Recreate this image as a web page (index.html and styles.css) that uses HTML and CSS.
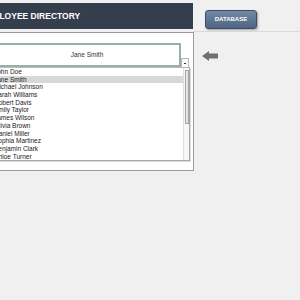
FILE: index.html
```html
<!DOCTYPE html>
<html lang="en">
<head>
    <meta charset="UTF-8">
    <meta name="viewport" content="width=device-width, initial-scale=1.0">
    <title>Employee Directory</title>
    <link rel="stylesheet" href="styles.css">
</head>
<body>
    <div class="page">
        <div class="directory">
            <div class="header">EMPLOYEE DIRECTORY</div>

            <div class="panel">
                <div class="combo">
                    <div class="combo-input">Jane Smith</div>
                    <div class="combo-btn"><span class="combo-glyph"></span></div>
                </div>

                <div class="list">
                    <ul class="list-items">
                        <li>John Doe</li>
                        <li class="selected">Jane Smith</li>
                        <li>Michael Johnson</li>
                        <li>Sarah Williams</li>
                        <li>Robert Davis</li>
                        <li>Emily Taylor</li>
                        <li>James Wilson</li>
                        <li>Olivia Brown</li>
                        <li>Daniel Miller</li>
                        <li>Sophia Martinez</li>
                        <li>Benjamin Clark</li>
                        <li>Chloe Turner</li>
                    </ul>
                    <div class="scrollbar">
                        <div class="thumb"></div>
                    </div>
                </div>
            </div>
        </div>

        <div class="side">
            <div class="toolbar">
                <button class="btn-db">DATABASE</button>
            </div>
            <div class="pointer">
                <svg width="17" height="10" viewBox="0 0 17 10">
                    <polygon points="0,5 7,0 7,2.5 16,2.5 16,7.5 7,7.5 7,10" fill="#707070"/>
                </svg>
            </div>
        </div>
    </div>
</body>
</html>
```

FILE: styles.css
```css
body {
    margin: 0;
    background-color: #f0f0f0;
    font-family: "Liberation Sans Narrow", "Liberation Sans", Arial, sans-serif;
    overflow: hidden;
}
.page {
    display: flex;
    margin-left: -20px;
}
.directory {
    width: 213px;
    flex: none;
}
.header {
    margin-top: 3px;
    height: 26px;
    background-color: #353e4d;
    color: white;
    font-weight: bold;
    font-size: 8.5px;
    line-height: 26px;
    padding-left: 1px;
    white-space: nowrap;
}
.panel {
    margin-top: 3px;
    height: 127px;
    background: white;
    border: 1px solid #999;
    padding: 10px 3px 0 12px;
    box-sizing: content-box;
    width: 197px;
}
.combo {
    position: relative;
    width: 188px;
}
.combo-input {
    height: 20px;
    border: 2px solid #97b2a3;
    text-align: center;
    font-size: 6.5px;
    line-height: 20px;
    color: #333;
}
.combo-btn {
    position: absolute;
    right: -8px;
    bottom: -1px;
    width: 6px;
    height: 8px;
    background: #fafafa;
    border: 1px solid #b5b5b5;
    display: flex;
    align-items: center;
    justify-content: center;
}
.combo-glyph {
    width: 2px;
    height: 1px;
    background: #333;
}
.list {
    display: flex;
    width: 195px;
    height: 92px;
    border: 1px solid #a8a8a8;
    border-top-color: #bdbdbd;
    box-shadow: 1px 1px 0 #dcdcdc;
}
.list-items {
    list-style: none;
    margin: 0;
    padding: 0;
    flex: 1;
}
.list-items li {
    height: 7.7px;
    line-height: 7.7px;
    font-size: 6.5px;
    color: #222;
    white-space: nowrap;
}
.list-items li.selected {
    background-color: #d8d8d8;
}
.scrollbar {
    width: 5px;
    border-left: 1px solid #dedede;
    background: #f7f7f7;
    padding-top: 2px;
}
.thumb {
    width: 2px;
    height: 52px;
    margin-left: 1px;
    border: 1px solid #a6a6a6;
    background: #e4e4e4;
}
.side {
    flex: 1;
}
.toolbar {
    height: 32px;
    border-bottom: 1px solid #dadada;
    box-sizing: border-box;
    padding: 7px 0 0 12px;
}
.btn-db {
    width: 52px;
    height: 19px;
    border: 1px solid #3e4f65;
    border-radius: 3px;
    background: linear-gradient(#7189a5, #4f6582);
    box-shadow: 1px 1px 2px rgba(0,0,0,0.35);
    color: white;
    font-family: "Liberation Sans Narrow", "Liberation Sans", sans-serif;
    font-weight: bold;
    font-size: 6px;
    padding: 0;
}
.pointer {
    padding: 19px 0 0 9px;
    line-height: 0;
}
```
